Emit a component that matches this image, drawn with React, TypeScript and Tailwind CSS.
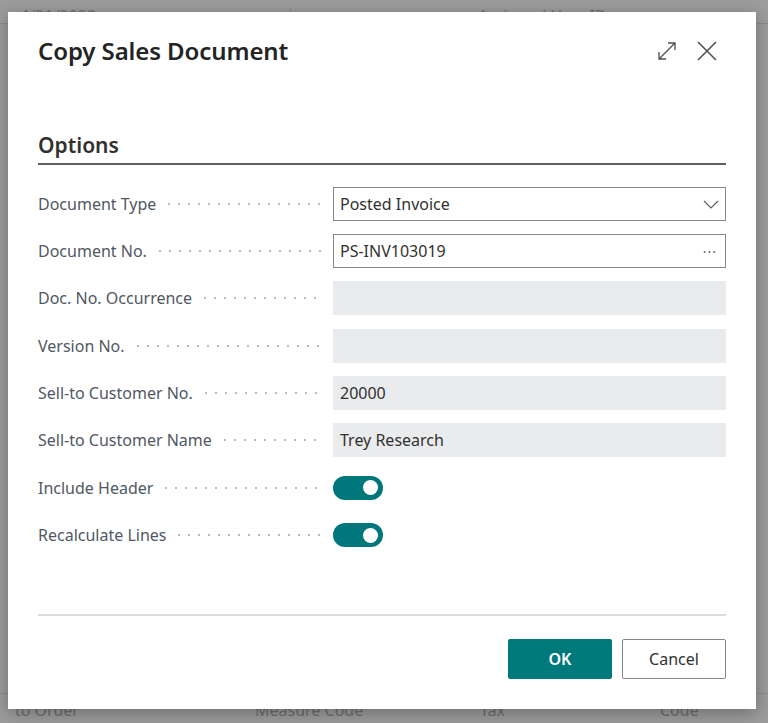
import React, { useState } from 'react';

const fields = [
  { label: 'Document Type', kind: 'select', value: 'Posted Invoice' },
  { label: 'Document No.', kind: 'lookup', value: 'PS-INV103019' },
  { label: 'Doc. No. Occurrence', kind: 'readonly', value: '' },
  { label: 'Version No.', kind: 'readonly', value: '' },
  { label: 'Sell-to Customer No.', kind: 'readonly', value: '20000' },
  { label: 'Sell-to Customer Name', kind: 'readonly', value: 'Trey Research' },
];

const Toggle = ({ on, onClick }: { on: boolean; onClick: () => void }) => (
  <button
    onClick={onClick}
    className={`flex h-[24px] w-[50px] items-center rounded-full px-[5px] ${on ? 'justify-end bg-[#00777a]' : 'justify-start border border-[#605e5c] bg-white'}`}
  >
    <span className={`block h-[15px] w-[15px] rounded-full ${on ? 'bg-white' : 'bg-[#605e5c]'}`} />
  </button>
);

const Label = ({ text }: { text: string }) => (
  <div className="flex h-[34px] items-center pr-[12px]">
    <span className="whitespace-nowrap pr-[8px] text-[16px] text-[#505862]">{text}</span>
    <span className="h-[4px] flex-1 bg-[radial-gradient(circle,#b9b9b9_0.9px,transparent_1.3px)] bg-[length:10px_4px] bg-repeat-x" />
  </div>
);

export default function App() {
  const [header, setHeader] = useState(true);
  const [recalc, setRecalc] = useState(true);

  return (
    <div className="relative h-[723px] w-[768px] overflow-hidden bg-[#9c9c9c] font-['Noto_Sans','Open_Sans',sans-serif]">
      {/* page behind the dimmed overlay */}
      <div className="flex h-full flex-col justify-between text-[16px] text-[#6e6e6e]">
        <div className="flex h-[24px] items-center border-b border-[#8c8c8c]">
          <span className="w-[290px] pl-[20px] pt-[8px]">4/21/2023</span>
          <span className="w-[188px] border-l border-[#8c8c8c] pt-[8px]" />
          <span className="pt-[8px]">Assigned User ID</span>
        </div>
        <div className="flex h-[30px] items-start border-t border-[#8e8e8e] pt-[4px]">
          <span className="w-[255px] pl-[15px]">to Order</span>
          <span className="w-[225px]">Measure Code</span>
          <span className="w-[180px]">Tax</span>
          <span>Code</span>
        </div>
      </div>

      {/* dialog */}
      <div className="absolute left-[8px] top-[12px] flex h-[697px] w-[748px] flex-col bg-white px-[30px] shadow-[0_4px_16px_rgba(0,0,0,0.3)]">
        <div className="flex h-[80px] items-center justify-between pb-[2px]">
          <h1 className="text-[24px] font-semibold tracking-[-0.1px] text-[#242424]">Copy Sales Document</h1>
          <div className="flex items-center gap-[20px] pr-[9px] text-[#505050]">
            <svg width="20" height="20" viewBox="0 0 20 20" fill="none" stroke="currentColor" strokeWidth="1.3">
              <path d="M2 18 L18 2 M11 2 H18 V9 M2 11 V18 H9" />
            </svg>
            <svg width="20" height="20" viewBox="0 0 20 20" fill="none" stroke="currentColor" strokeWidth="1.6">
              <path d="M1 1 L19 19 M19 1 L1 19" />
            </svg>
          </div>
        </div>

        <div className="mt-[38px] border-b-2 border-[#605e5c] pb-[1px]">
          <h2 className="text-[21px] font-semibold text-[#323130]">Options</h2>
        </div>

        <div className="mt-[22px] grid grid-cols-[295px_1fr] gap-y-[13.4px]">
          {fields.map((f) => (
            <React.Fragment key={f.label}>
              <Label text={f.label} />
              {f.kind === 'readonly' ? (
                <div className="flex h-[34px] items-center bg-[#eaebec] px-[7px] text-[16px] text-[#323130]">{f.value}</div>
              ) : (
                <div className="flex h-[34px] items-center justify-between border border-[#8a8886] bg-white px-[6px] text-[16px] text-[#323130]">
                  <span>{f.value}</span>
                  {f.kind === 'select' ? (
                    <svg width="16" height="16" viewBox="0 0 16 16" fill="none" stroke="#605e5c" strokeWidth="1.2">
                      <path d="M1 5 L8 12 L15 5" />
                    </svg>
                  ) : (
                    <span className="pb-[6px] pr-[2px] text-[14px] tracking-[1px] text-[#605e5c]">...</span>
                  )}
                </div>
              )}
            </React.Fragment>
          ))}
          <Label text="Include Header" />
          <div className="flex h-[34px] items-center">
            <Toggle on={header} onClick={() => setHeader(!header)} />
          </div>
          <Label text="Recalculate Lines" />
          <div className="flex h-[34px] items-center">
            <Toggle on={recalc} onClick={() => setRecalc(!recalc)} />
          </div>
        </div>

        <div className="mt-[62px] border-t-2 border-[#dcdcdc]" />

        <div className="mt-[23px] flex justify-end gap-[10px]">
          <button className="h-[40px] w-[104px] rounded-[2px] bg-[#00797b] text-[16px] font-semibold text-white">OK</button>
          <button className="h-[40px] w-[104px] rounded-[2px] border border-[#8a8886] bg-white text-[16px] text-[#323130]">Cancel</button>
        </div>
      </div>
    </div>
  );
}
